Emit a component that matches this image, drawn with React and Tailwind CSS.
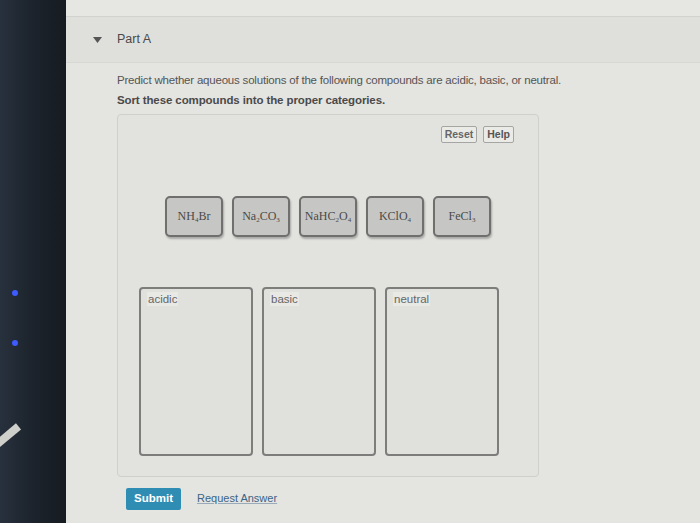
import { useState } from 'react'

// Mastering-style sorting question: drag compound chips into acidic / basic / neutral bins.
const compounds = [
  { id: 'nh4br', label: <>NH<sub>4</sub>Br</> },
  { id: 'na2co3', label: <>Na<sub>2</sub>CO<sub>3</sub></> },
  { id: 'nahc2o4', label: <>NaHC<sub>2</sub>O<sub>4</sub></> },
  { id: 'kclo4', label: <>KClO<sub>4</sub></> },
  { id: 'fecl3', label: <>FeCl<sub>3</sub></> },
]

const bins = ['acidic', 'basic', 'neutral']

function Chip({ children }) {
  return (
    <div className="flex h-[41px] w-[58px] items-center justify-center rounded-[5px] border-2 border-[#6f706e] bg-[#c6c7c4] text-[12px] text-[#4a4a4a] shadow-[1px_2px_2px_rgba(0,0,0,0.25)] [font-family:'Liberation_Serif',serif] [&_sub]:text-[7px]">
      <span>{children}</span>
    </div>
  )
}

export default function App() {
  const [open, setOpen] = useState(true)

  return (
    <div className="flex h-[523px] w-[700px] overflow-hidden bg-[#e4e4e1] [font-family:'Liberation_Sans',Arial,sans-serif]">
      {/* dark bezel on the left of the photographed screen */}
      <div className="relative w-[66px] shrink-0 bg-gradient-to-r from-[#27313d] via-[#1c232c] to-[#161b21]">
        <span className="absolute left-[12px] top-[290px] h-[6px] w-[6px] rounded-full bg-[#3d5bff]" />
        <span className="absolute left-[12px] top-[340px] h-[6px] w-[6px] rounded-full bg-[#3d5bff]" />
        <span className="absolute left-[-8px] top-[432px] h-[8px] w-[30px] -rotate-[40deg] bg-[#cfcfcc]" />
      </div>

      <div className="flex min-w-0 flex-1 flex-col">
        <div className="h-[17px] shrink-0 border-b border-[#d2d3d0] bg-[#e6e6e3]" />

        <button
          onClick={() => setOpen(!open)}
          className="flex h-[46px] shrink-0 items-center border-b border-[#d6d7d4] bg-[#dfdfdc] pl-[27px] text-left"
        >
          <svg width="9" height="6" viewBox="0 0 9 6" className="mr-[15px]">
            <path d="M0 0h9L4.5 6z" fill="#555" />
          </svg>
          <span className="text-[12.5px] text-[#4a4a4a]">Part A</span>
        </button>

        {open && (
          <div className="flex flex-col pl-[51px]">
            <p className="mt-[9px] text-[11.5px] tracking-[-0.2px] text-[#555]">
              Predict whether aqueous solutions of the following compounds are acidic, basic, or neutral.
            </p>
            <p className="mt-[3px] text-[11.5px] font-bold tracking-[-0.1px] text-[#4a4a4a]">
              Sort these compounds into the proper categories.
            </p>

            <div className="mt-[4px] flex h-[363px] w-[422px] flex-col rounded-[4px] border border-[#cfd0cd] bg-[#e2e2df] px-[21px] pt-[11px]">
              <div className="flex justify-end gap-[6px] pr-[3px]">
                <button className="h-[17px] rounded-[2px] border border-[#a5a6a3] bg-[#eaeae7] px-[3px] text-[10.5px] font-bold text-[#666]">
                  Reset
                </button>
                <button className="h-[17px] rounded-[2px] border border-[#a5a6a3] bg-[#eaeae7] px-[3px] text-[10.5px] font-bold text-[#555]">
                  Help
                </button>
              </div>

              <div className="mt-[53px] flex justify-center gap-[9px]">
                {compounds.map((c) => (
                  <Chip key={c.id}>{c.label}</Chip>
                ))}
              </div>

              <div className="mt-[50px] flex gap-[9px]">
                {bins.map((b) => (
                  <div
                    key={b}
                    className="h-[169px] w-[114px] rounded-[4px] border-2 border-[#7d7e7c] bg-[#e0e0dd] px-[6px] pt-[3px]"
                  >
                    <span className="block w-fit bg-[#e8e8e5] px-[1px] text-[11.5px] leading-[14px] text-[#666]">{b}</span>
                  </div>
                ))}
              </div>
            </div>

            <div className="mt-[11px] flex items-center gap-[16px] pl-[9px]">
              <button className="h-[22px] w-[55px] rounded-[2px] bg-[#2f8db3] text-[11.5px] font-bold text-white">
                Submit
              </button>
              <a className="text-[11px] text-[#3c6585] underline decoration-[#9ab]">Request Answer</a>
            </div>
          </div>
        )}
      </div>
    </div>
  )
}
